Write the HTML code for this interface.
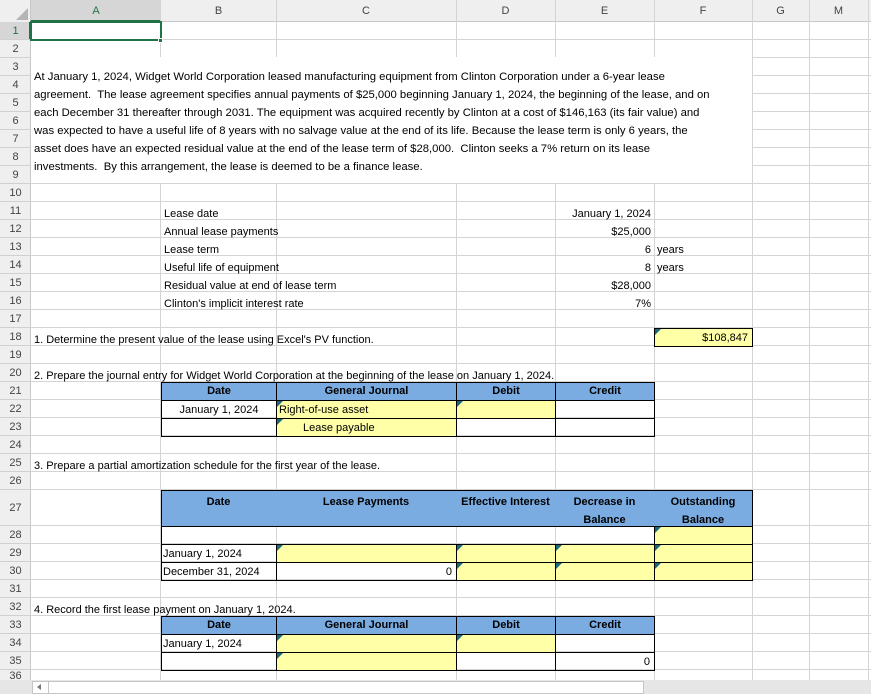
<!DOCTYPE html>
<html><head><meta charset="utf-8"><style>
*{margin:0;padding:0;box-sizing:border-box}
body{width:871px;height:694px;overflow:hidden;background:#fff;font-family:"Liberation Sans",Arial,sans-serif;font-size:11px;color:#000;position:relative}
.a{position:absolute}
.hl{position:absolute;left:0;width:871px;height:1px;background:#d4d4d4}
.vl{position:absolute;top:0;width:1px;height:680px;background:#d4d4d4}
.t{position:absolute;white-space:nowrap;line-height:18px;height:18px;padding-top:1px}
.c{position:absolute;border:1px solid #000;line-height:17px;white-space:nowrap;overflow:visible}
.y{background:#ffffa8}
.b{background:#7aace2;text-align:center}
.tri{position:absolute;left:0;top:0;width:0;height:0;border-top:6px solid #1a6b7a;border-right:6px solid transparent}
.rn{position:absolute;left:0;width:31px;text-align:center;color:#444;font-size:11px;line-height:18px}
.ch{position:absolute;top:0;height:22px;line-height:22px;text-align:center;color:#444;font-size:11px}
</style></head><body>
<div class="a" style="left:0;top:0;width:871px;height:22px;background:#efefef;border-bottom:1px solid #c8c8c8"></div>
<div class="a" style="left:0;top:0;width:31px;height:694px;background:#efefef;border-right:1px solid #c8c8c8"></div>
<div class="a" style="left:31px;top:0;width:130px;height:22px;background:#d6d6d6;border-bottom:2px solid #217346"></div>
<div class="a" style="left:0;top:22px;width:31px;height:18px;background:#d6d6d6;border-right:2px solid #217346"></div>
<div class="a" style="left:16px;top:8px;width:0;height:0;border-bottom:12px solid #b5b5b5;border-left:12px solid transparent"></div>

<div class="a" style="left:31px;top:22px;width:840px;height:468px;background:repeating-linear-gradient(to bottom,transparent 0 17px,#d4d4d4 17px 18px)"></div>
<div class="hl" style="left:31px;top:525px;width:840px"></div>
<div class="a" style="left:31px;top:526px;width:840px;height:154px;background:repeating-linear-gradient(to bottom,transparent 0 17px,#d4d4d4 17px 18px)"></div>
<div class="a" style="left:0;top:22px;width:31px;height:468px;background:repeating-linear-gradient(to bottom,transparent 0 17px,#d0d0d0 17px 18px)"></div>
<div class="a" style="left:0;top:525px;width:31px;height:1px;background:#d0d0d0"></div>
<div class="a" style="left:0;top:526px;width:31px;height:154px;background:repeating-linear-gradient(to bottom,transparent 0 17px,#d0d0d0 17px 18px)"></div>
<div class="vl" style="left:160px"></div><div class="vl" style="left:276px"></div><div class="vl" style="left:456px"></div><div class="vl" style="left:555px"></div><div class="vl" style="left:654px"></div><div class="vl" style="left:752px"></div><div class="vl" style="left:809px"></div><div class="vl" style="left:868px"></div>

<div class="a" style="left:31px;top:57px;width:721px;height:126px;background:#fff"></div>

<div class="ch" style="left:31px;width:130px;color:#217346">A</div>
<div class="ch" style="left:161px;width:115px">B</div>
<div class="ch" style="left:276px;width:180px">C</div>
<div class="ch" style="left:456px;width:99px">D</div>
<div class="ch" style="left:555px;width:99px">E</div>
<div class="ch" style="left:654px;width:98px">F</div>
<div class="ch" style="left:752px;width:57px">G</div>
<div class="ch" style="left:809px;width:59px">M</div>

<div class="rn" style="top:22px;color:#217346">1</div><div class="rn" style="top:40px">2</div><div class="rn" style="top:58px">3</div><div class="rn" style="top:76px">4</div><div class="rn" style="top:94px">5</div><div class="rn" style="top:112px">6</div><div class="rn" style="top:130px">7</div><div class="rn" style="top:148px">8</div><div class="rn" style="top:166px">9</div><div class="rn" style="top:184px">10</div><div class="rn" style="top:202px">11</div><div class="rn" style="top:220px">12</div><div class="rn" style="top:238px">13</div><div class="rn" style="top:256px">14</div><div class="rn" style="top:274px">15</div><div class="rn" style="top:292px">16</div><div class="rn" style="top:310px">17</div><div class="rn" style="top:328px">18</div><div class="rn" style="top:346px">19</div><div class="rn" style="top:364px">20</div><div class="rn" style="top:382px">21</div><div class="rn" style="top:400px">22</div><div class="rn" style="top:418px">23</div><div class="rn" style="top:436px">24</div><div class="rn" style="top:454px">25</div><div class="rn" style="top:472px">26</div><div class="rn" style="top:499px">27</div><div class="rn" style="top:526px">28</div><div class="rn" style="top:544px">29</div><div class="rn" style="top:562px">30</div><div class="rn" style="top:580px">31</div><div class="rn" style="top:598px">32</div><div class="rn" style="top:616px">33</div><div class="rn" style="top:634px">34</div><div class="rn" style="top:652px">35</div><div class="rn" style="top:670px;height:10px;overflow:hidden;line-height:12px">36</div>

<div class="a" style="left:30px;top:21px;width:132px;height:20px;border:2px solid #217346"></div>
<div class="a" style="left:158px;top:38px;width:5px;height:5px;background:#217346;border:1px solid #fff"></div>

<div class="a" style="left:34px;top:68px;width:730px;line-height:18px;font-size:11.3px">
At January 1, 2024, Widget World Corporation leased manufacturing equipment from Clinton Corporation under a 6-year lease<br>agreement.&nbsp; The lease agreement specifies annual payments of $25,000 beginning January 1, 2024, the beginning of the lease, and on<br>each December 31 thereafter through 2031. The equipment was acquired recently by Clinton at a cost of $146,163 (its fair value) and<br>was expected to have a useful life of 8 years with no salvage value at the end of its life. Because the lease term is only 6 years, the<br>asset does have an expected residual value at the end of the lease term of $28,000.&nbsp; Clinton seeks a 7% return on its lease<br>investments.&nbsp; By this arrangement, the lease is deemed to be a finance lease.</div>

<div class="t" style="left:164px;top:204px">Lease date</div>
<div class="t" style="left:164px;top:222px">Annual lease payments</div>
<div class="t" style="left:164px;top:240px">Lease term</div>
<div class="t" style="left:164px;top:258px">Useful life of equipment</div>
<div class="t" style="left:164px;top:276px">Residual value at end of lease term</div>
<div class="t" style="left:164px;top:294px">Clinton's implicit interest rate</div>
<div class="t" style="left:555px;width:96px;text-align:right;top:204px">January 1, 2024</div>
<div class="t" style="left:555px;width:96px;text-align:right;top:222px">$25,000</div>
<div class="t" style="left:555px;width:96px;text-align:right;top:240px">6</div>
<div class="t" style="left:555px;width:96px;text-align:right;top:258px">8</div>
<div class="t" style="left:555px;width:96px;text-align:right;top:276px">$28,000</div>
<div class="t" style="left:555px;width:96px;text-align:right;top:294px">7%</div>
<div class="t" style="left:657px;top:240px">years</div>
<div class="t" style="left:657px;top:258px">years</div>

<div class="t" style="left:34px;top:330px">1. Determine the present value of the lease using Excel's PV function.</div>
<div class="c y" style="left:654px;top:328px;width:99px;height:19px;text-align:right;padding-right:4px;padding-top:1px"><div class="tri"></div>$108,847</div>

<div class="t" style="left:34px;top:366px">2. Prepare the journal entry for Widget World Corporation at the beginning of the lease on January 1, 2024.</div>
<div class="c b" style="left:161px;top:382px;width:116px;height:19px;font-weight:bold">Date</div>
<div class="c b" style="left:276px;top:382px;width:181px;height:19px;font-weight:bold">General Journal</div>
<div class="c b" style="left:456px;top:382px;width:100px;height:19px;font-weight:bold">Debit</div>
<div class="c b" style="left:555px;top:382px;width:100px;height:19px;font-weight:bold">Credit</div>
<div class="c" style="left:161px;top:400px;width:116px;height:19px;text-align:center;padding-top:1px">January 1, 2024</div>
<div class="c y" style="left:276px;top:400px;width:181px;height:19px;padding-left:2px;padding-top:1px"><div class="tri"></div>Right-of-use asset</div>
<div class="c y" style="left:456px;top:400px;width:100px;height:19px"><div class="tri"></div></div>
<div class="c" style="left:555px;top:400px;width:100px;height:19px"></div>
<div class="c" style="left:161px;top:418px;width:116px;height:19px"></div>
<div class="c y" style="left:276px;top:418px;width:181px;height:19px;padding-left:26px;padding-top:1px"><div class="tri"></div>Lease payable</div>
<div class="c" style="left:456px;top:418px;width:100px;height:19px"></div>
<div class="c" style="left:555px;top:418px;width:100px;height:19px"></div>

<div class="t" style="left:34px;top:456px">3. Prepare a partial amortization schedule for the first year of the lease.</div>
<div class="c b" style="left:161px;top:490px;width:592px;height:37px"></div>
<div class="t" style="left:161px;width:115px;text-align:center;top:492px;font-weight:bold">Date</div>
<div class="t" style="left:276px;width:180px;text-align:center;top:492px;font-weight:bold">Lease Payments</div>
<div class="t" style="left:456px;width:99px;text-align:center;top:492px;font-weight:bold">Effective Interest</div>
<div class="t" style="left:555px;width:99px;text-align:center;top:492px;font-weight:bold">Decrease in</div>
<div class="t" style="left:555px;width:99px;text-align:center;top:510px;font-weight:bold">Balance</div>
<div class="t" style="left:654px;width:98px;text-align:center;top:492px;font-weight:bold">Outstanding</div>
<div class="t" style="left:654px;width:98px;text-align:center;top:510px;font-weight:bold">Balance</div>
<div class="c" style="left:161px;top:526px;width:494px;height:19px;border-right:none"></div>
<div class="c y" style="left:654px;top:526px;width:99px;height:19px"><div class="tri"></div></div>
<div class="c" style="left:161px;top:544px;width:116px;height:19px;padding-left:1px;padding-top:1px">January 1, 2024</div>
<div class="c y" style="left:276px;top:544px;width:181px;height:19px"><div class="tri"></div></div>
<div class="c y" style="left:456px;top:544px;width:100px;height:19px"><div class="tri"></div></div>
<div class="c y" style="left:555px;top:544px;width:100px;height:19px"><div class="tri"></div></div>
<div class="c y" style="left:654px;top:544px;width:99px;height:19px"><div class="tri"></div></div>
<div class="c" style="left:161px;top:562px;width:116px;height:19px;padding-left:1px;padding-top:1px">December 31, 2024</div>
<div class="c" style="left:276px;top:562px;width:181px;height:19px;text-align:right;padding-right:4px;padding-top:1px">0</div>
<div class="c y" style="left:456px;top:562px;width:100px;height:19px"><div class="tri"></div></div>
<div class="c y" style="left:555px;top:562px;width:100px;height:19px"><div class="tri"></div></div>
<div class="c y" style="left:654px;top:562px;width:99px;height:19px"><div class="tri"></div></div>

<div class="t" style="left:34px;top:600px">4. Record the first lease payment on January 1, 2024.</div>
<div class="c b" style="left:161px;top:616px;width:116px;height:19px;font-weight:bold">Date</div>
<div class="c b" style="left:276px;top:616px;width:181px;height:19px;font-weight:bold">General Journal</div>
<div class="c b" style="left:456px;top:616px;width:100px;height:19px;font-weight:bold">Debit</div>
<div class="c b" style="left:555px;top:616px;width:100px;height:19px;font-weight:bold">Credit</div>
<div class="c" style="left:161px;top:634px;width:116px;height:19px;padding-left:1px;padding-top:1px">January 1, 2024</div>
<div class="c y" style="left:276px;top:634px;width:181px;height:19px"><div class="tri"></div></div>
<div class="c y" style="left:456px;top:634px;width:100px;height:19px"><div class="tri"></div></div>
<div class="c" style="left:555px;top:634px;width:100px;height:19px"></div>
<div class="c" style="left:161px;top:652px;width:116px;height:19px"></div>
<div class="c y" style="left:276px;top:652px;width:181px;height:19px"><div class="tri"></div></div>
<div class="c" style="left:456px;top:652px;width:100px;height:19px"></div>
<div class="c" style="left:555px;top:652px;width:100px;height:19px;text-align:right;padding-right:4px;padding-top:1px">0</div>

<div class="a" style="left:0;top:680px;width:871px;height:14px;background:#e6e6e6"></div>
<div class="a" style="left:32px;top:681px;width:612px;height:13px;background:#fff;border:1px solid #c6c6c6"></div>
<div class="a" style="left:32px;top:681px;width:17px;height:13px;background:#fff;border:1px solid #c6c6c6"></div>
<div class="a" style="left:37px;top:684px;width:0;height:0;border-top:3px solid transparent;border-bottom:3px solid transparent;border-right:4px solid #777"></div>
</body></html>
